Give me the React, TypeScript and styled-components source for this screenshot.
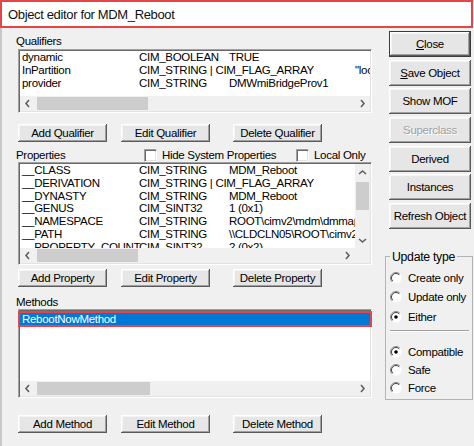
import React from 'react';
import styled, { createGlobalStyle } from 'styled-components';

const GlobalStyle = createGlobalStyle`
  * { box-sizing: border-box; }
  html, body { margin: 0; padding: 0; background: #f0f0f0; }
  body {
    font-family: "Liberation Sans", Arial, sans-serif;
    font-size: 11.5px;
    letter-spacing: -0.3px;
    color: #000;
  }
`;

const Window = styled.div`
  width: 474px;
  height: 446px;
  background: #f0f0f0;
  overflow: hidden;
`;

const TitleBar = styled.div`
  height: 28px;
  width: 473px;
  border: 2px solid #e64545;
  background: #fff;
  display: flex;
  align-items: center;
  padding-left: 6px;
  font-size: 13px;
  letter-spacing: -0.35px;
  color: #111;
`;

const Body = styled.div`
  display: flex;
  height: 418px;
  border-left: 2px solid #c8c8c8;
`;

const MainColumn = styled.div`
  width: 356px;
  margin-left: 14px;
  padding-top: 7px;
  display: flex;
  flex-direction: column;
`;

const SideColumn = styled.div`
  width: 82px;
  margin-left: 17px;
  padding-top: 3px;
  display: flex;
  flex-direction: column;
`;

const Caption = styled.div<{ $top?: number }>`
  height: 13px;
  line-height: 13px;
  margin-top: ${(p) => p.$top ?? 0}px;
`;

const ListBox = styled.div<{ $h: number; $top?: number }>`
  margin-left: 2px;
  margin-top: ${(p) => p.$top ?? 0}px;
  width: 354px;
  height: ${(p) => p.$h}px;
  background: #fff;
  border-style: solid;
  border-width: 1px;
  border-color: #a0a0a0 #ffffff #ffffff #a0a0a0;
  box-shadow: inset 1px 1px #696969, inset -1px -1px #e3e3e3;
  padding: 1px;
  display: flex;
  flex-direction: column;
`;

const ListMain = styled.div`
  flex: 1;
  display: flex;
  min-height: 0;
`;

const Rows = styled.div`
  flex: 1;
  min-width: 0;
  overflow: hidden;
  padding-left: 2px;
`;

const Row = styled.div`
  display: flex;
  height: 12.8px;
  line-height: 12.8px;
  white-space: nowrap;
`;

const Cell = styled.span<{ $w?: number }>`
  flex: none;
  width: ${(p) => (p.$w ? `${p.$w}px` : 'auto')};
  overflow: visible;
`;

const SelectedRow = styled.div`
  height: 12px;
  line-height: 12px;
  margin-top: 2px;
  padding-left: 2px;
  background: #0078d7;
  color: #fff;
  outline: 2px solid #e64545;
  white-space: nowrap;
`;

const Spacer = styled.div`
  flex: 1;
`;

const HScrollRow = styled.div`
  display: flex;
  height: 15px;
  flex: none;
`;

const ScrollBar = styled.div<{ $vertical?: boolean }>`
  flex: ${(p) => (p.$vertical ? 'none' : '1')};
  width: ${(p) => (p.$vertical ? '15px' : 'auto')};
  display: flex;
  flex-direction: ${(p) => (p.$vertical ? 'column' : 'row')};
  background: #f0f0f0;
`;

const ArrowBox = styled.div<{ $vertical?: boolean }>`
  flex: none;
  width: 15px;
  height: ${(p) => (p.$vertical ? '16px' : '15px')};
  display: flex;
  align-items: center;
  justify-content: center;
`;

const Track = styled.div<{ $vertical?: boolean }>`
  flex: 1;
  display: flex;
  flex-direction: ${(p) => (p.$vertical ? 'column' : 'row')};
  padding: ${(p) => (p.$vertical ? '0 1px' : '1px 0')};
`;

const Thumb = styled.div`
  background: #cdcdcd;
  flex: none;
`;

const Corner = styled.div`
  width: 15px;
  flex: none;
  background: #f0f0f0;
`;

const Chevron = ({ dir }: { dir: 'left' | 'right' | 'up' | 'down' }) => {
  const d = {
    left: 'M5 1 L2 4.5 L5 8',
    right: 'M2 1 L5 4.5 L2 8',
    up: 'M1 5 L4.5 2 L8 5',
    down: 'M1 2 L4.5 5 L8 2',
  }[dir];
  const vertical = dir === 'up' || dir === 'down';
  return (
    <svg width={vertical ? 9 : 7} height={vertical ? 7 : 9} viewBox={vertical ? '0 0 9 7' : '0 0 7 9'}>
      <path d={d} fill="none" stroke="#606060" strokeWidth="1.6" />
    </svg>
  );
};

const HScroll = ({ start, len }: { start: number; len: number }) => (
  <ScrollBar>
    <ArrowBox>
      <Chevron dir="left" />
    </ArrowBox>
    <Track>
      <Thumb style={{ marginLeft: start, width: len }} />
    </Track>
    <ArrowBox>
      <Chevron dir="right" />
    </ArrowBox>
  </ScrollBar>
);

const VScroll = ({ start, len }: { start: number; len: number }) => (
  <ScrollBar $vertical>
    <ArrowBox $vertical>
      <Chevron dir="up" />
    </ArrowBox>
    <Track $vertical>
      <Thumb style={{ marginTop: start, height: len }} />
    </Track>
    <ArrowBox $vertical>
      <Chevron dir="down" />
    </ArrowBox>
  </ScrollBar>
);

const ActionRow = styled.div<{ $top: number }>`
  display: flex;
  margin-top: ${(p) => p.$top}px;
  margin-left: 2px;
`;

const ActionButton = styled.button<{ $gap?: number }>`
  width: 89px;
  height: 18px;
  margin-left: ${(p) => p.$gap ?? 0}px;
  padding: 0;
  border: none;
  background: #e6e6e6;
  box-shadow: inset -1px -1px #5a5a5a, inset 1px 1px #ffffff, inset -2px -2px #a0a0a0, inset 2px 2px #f4f4f4;
  font: inherit;
  letter-spacing: inherit;
  color: #000;
`;

const SideButton = styled.button<{ $default?: boolean; $disabled?: boolean }>`
  width: 82px;
  height: 26px;
  margin-bottom: 2.7px;
  padding: 0;
  border: ${(p) => (p.$default ? '1px solid #3c3c3c' : 'none')};
  background: #e6e6e6;
  box-shadow: inset -1px -1px #5a5a5a, inset 1px 1px #ffffff, inset -2px -2px #a0a0a0, inset 2px 2px #f4f4f4;
  font: inherit;
  letter-spacing: inherit;
  color: ${(p) => (p.$disabled ? '#a0a0a0' : '#000')};
  text-shadow: ${(p) => (p.$disabled ? '1px 1px #ffffff' : 'none')};
`;

const HeaderRow = styled.div`
  display: grid;
  grid-template-columns: 128px 152px auto;
  align-items: center;
  height: 14px;
  margin-top: 6px;
`;

const CheckLabel = styled.label`
  display: flex;
  align-items: center;
  gap: 5px;
  white-space: nowrap;
`;

const CheckBox = styled.span`
  width: 13px;
  height: 13px;
  background: #fff;
  border-style: solid;
  border-width: 1px;
  border-color: #a0a0a0 #ffffff #ffffff #a0a0a0;
  box-shadow: inset 1px 1px #696969, inset -1px -1px #e3e3e3;
`;

const GroupBox = styled.fieldset`
  margin: 18px 0 0 -4px;
  width: 88px;
  min-width: 0;
  padding: 4px 0 2px 4px;
  border: 1px solid #b4b4b4;
`;

const GroupLegend = styled.legend`
  padding: 0 2px;
  font-size: 12.3px;
  line-height: 14px;
  letter-spacing: -0.3px;
`;

const RadioRow = styled.div<{ $h: number }>`
  display: flex;
  align-items: center;
  gap: 6px;
  height: ${(p) => p.$h}px;
  white-space: nowrap;
`;

const Separator = styled.div`
  height: 2px;
  margin: 4px 3px 11px 0;
  border-top: 1px solid #a0a0a0;
  border-bottom: 1px solid #ffffff;
`;

const Radio = ({ checked }: { checked?: boolean }) => (
  <svg width="12" height="12" viewBox="0 0 12 12">
    <circle cx="6" cy="6" r="5.5" fill="#fff" />
    <path d="M9.9 2.1 A5.5 5.5 0 0 0 2.1 9.9" fill="none" stroke="#8a8a8a" strokeWidth="1" />
    <path d="M9.2 2.8 A4.5 4.5 0 0 0 2.8 9.2" fill="none" stroke="#404040" strokeWidth="1" />
    {checked && <circle cx="6" cy="6" r="1.8" fill="#000" />}
  </svg>
);

const qualifiers = [
  { name: 'dynamic', type: 'CIM_BOOLEAN', value: 'TRUE', typeW: 90 },
  { name: 'InPartition', type: 'CIM_STRING | CIM_FLAG_ARRAY', value: '"loc', typeW: 216 },
  { name: 'provider', type: 'CIM_STRING', value: 'DMWmiBridgeProv1', typeW: 90 },
];

const properties = [
  { name: '__CLASS', type: 'CIM_STRING', value: 'MDM_Reboot' },
  { name: '__DERIVATION', type: 'CIM_STRING | CIM_FLAG_ARRAY', value: '' },
  { name: '__DYNASTY', type: 'CIM_STRING', value: 'MDM_Reboot' },
  { name: '__GENUS', type: 'CIM_SINT32', value: '1 (0x1)' },
  { name: '__NAMESPACE', type: 'CIM_STRING', value: 'ROOT\\cimv2\\mdm\\dmmap' },
  { name: '__PATH', type: 'CIM_STRING', value: '\\\\CLDCLN05\\ROOT\\cimv2\\mdm\\dmmap:MDM_Reboot' },
  { name: '__PROPERTY_COUNT', type: 'CIM_SINT32', value: '2 (0x2)' },
];

export default function App() {
  return (
    <Window>
      <GlobalStyle />
      <TitleBar>Object editor for MDM_Reboot</TitleBar>
      <Body>
        <MainColumn>
          <Caption>Qualifiers</Caption>
          <ListBox $h={64} $top={1}>
            <ListMain>
              <Rows>
                {qualifiers.map((q) => (
                  <Row key={q.name}>
                    <Cell $w={117}>{q.name}</Cell>
                    <Cell $w={q.typeW}>{q.type}</Cell>
                    <Cell>{q.value}</Cell>
                  </Row>
                ))}
              </Rows>
            </ListMain>
            <HScrollRow>
              <HScroll start={2} len={111} />
            </HScrollRow>
          </ListBox>
          <ActionRow $top={11}>
            <ActionButton>Add Qualifier</ActionButton>
            <ActionButton $gap={14}>Edit Qualifier</ActionButton>
            <ActionButton $gap={23}>Delete Qualifier</ActionButton>
          </ActionRow>

          <HeaderRow>
            <span>Properties</span>
            <CheckLabel>
              <CheckBox />
              Hide System Properties
            </CheckLabel>
            <CheckLabel>
              <CheckBox />
              Local Only
            </CheckLabel>
          </HeaderRow>
          <ListBox $h={103}>
            <ListMain>
              <Rows>
                {properties.map((p) => (
                  <Row key={p.name}>
                    <Cell $w={117}>{p.name}</Cell>
                    <Cell $w={90}>{p.type}</Cell>
                    <Cell>{p.value}</Cell>
                  </Row>
                ))}
              </Rows>
              <VScroll start={2} len={28} />
            </ListMain>
            <HScrollRow>
              <HScroll start={2} len={101} />
              <Corner />
            </HScrollRow>
          </ListBox>
          <ActionRow $top={4}>
            <ActionButton>Add Property</ActionButton>
            <ActionButton $gap={14}>Edit Property</ActionButton>
            <ActionButton $gap={23}>Delete Property</ActionButton>
          </ActionRow>

          <Caption $top={9}>Methods</Caption>
          <ListBox $h={89}>
            <SelectedRow>RebootNowMethod</SelectedRow>
            <Spacer />
            <HScrollRow>
              <HScroll start={2} len={113} />
            </HScrollRow>
          </ListBox>
          <ActionRow $top={17}>
            <ActionButton>Add Method</ActionButton>
            <ActionButton $gap={14}>Edit Method</ActionButton>
            <ActionButton $gap={23}>Delete Method</ActionButton>
          </ActionRow>
        </MainColumn>

        <SideColumn>
          <SideButton $default>
            <u>C</u>lose
          </SideButton>
          <SideButton>
            <u>S</u>ave Object
          </SideButton>
          <SideButton>Show MOF</SideButton>
          <SideButton $disabled>Superclass</SideButton>
          <SideButton>Derived</SideButton>
          <SideButton>Instances</SideButton>
          <SideButton>Refresh Object</SideButton>

          <GroupBox>
            <GroupLegend>Update type</GroupLegend>
            <RadioRow $h={19.5}>
              <Radio />
              Create only
            </RadioRow>
            <RadioRow $h={19.5}>
              <Radio />
              Update only
            </RadioRow>
            <RadioRow $h={19.5}>
              <Radio checked />
              Either
            </RadioRow>
            <Separator />
            <RadioRow $h={18}>
              <Radio checked />
              Compatible
            </RadioRow>
            <RadioRow $h={18}>
              <Radio />
              Safe
            </RadioRow>
            <RadioRow $h={18}>
              <Radio />
              Force
            </RadioRow>
          </GroupBox>
        </SideColumn>
      </Body>
    </Window>
  );
}
